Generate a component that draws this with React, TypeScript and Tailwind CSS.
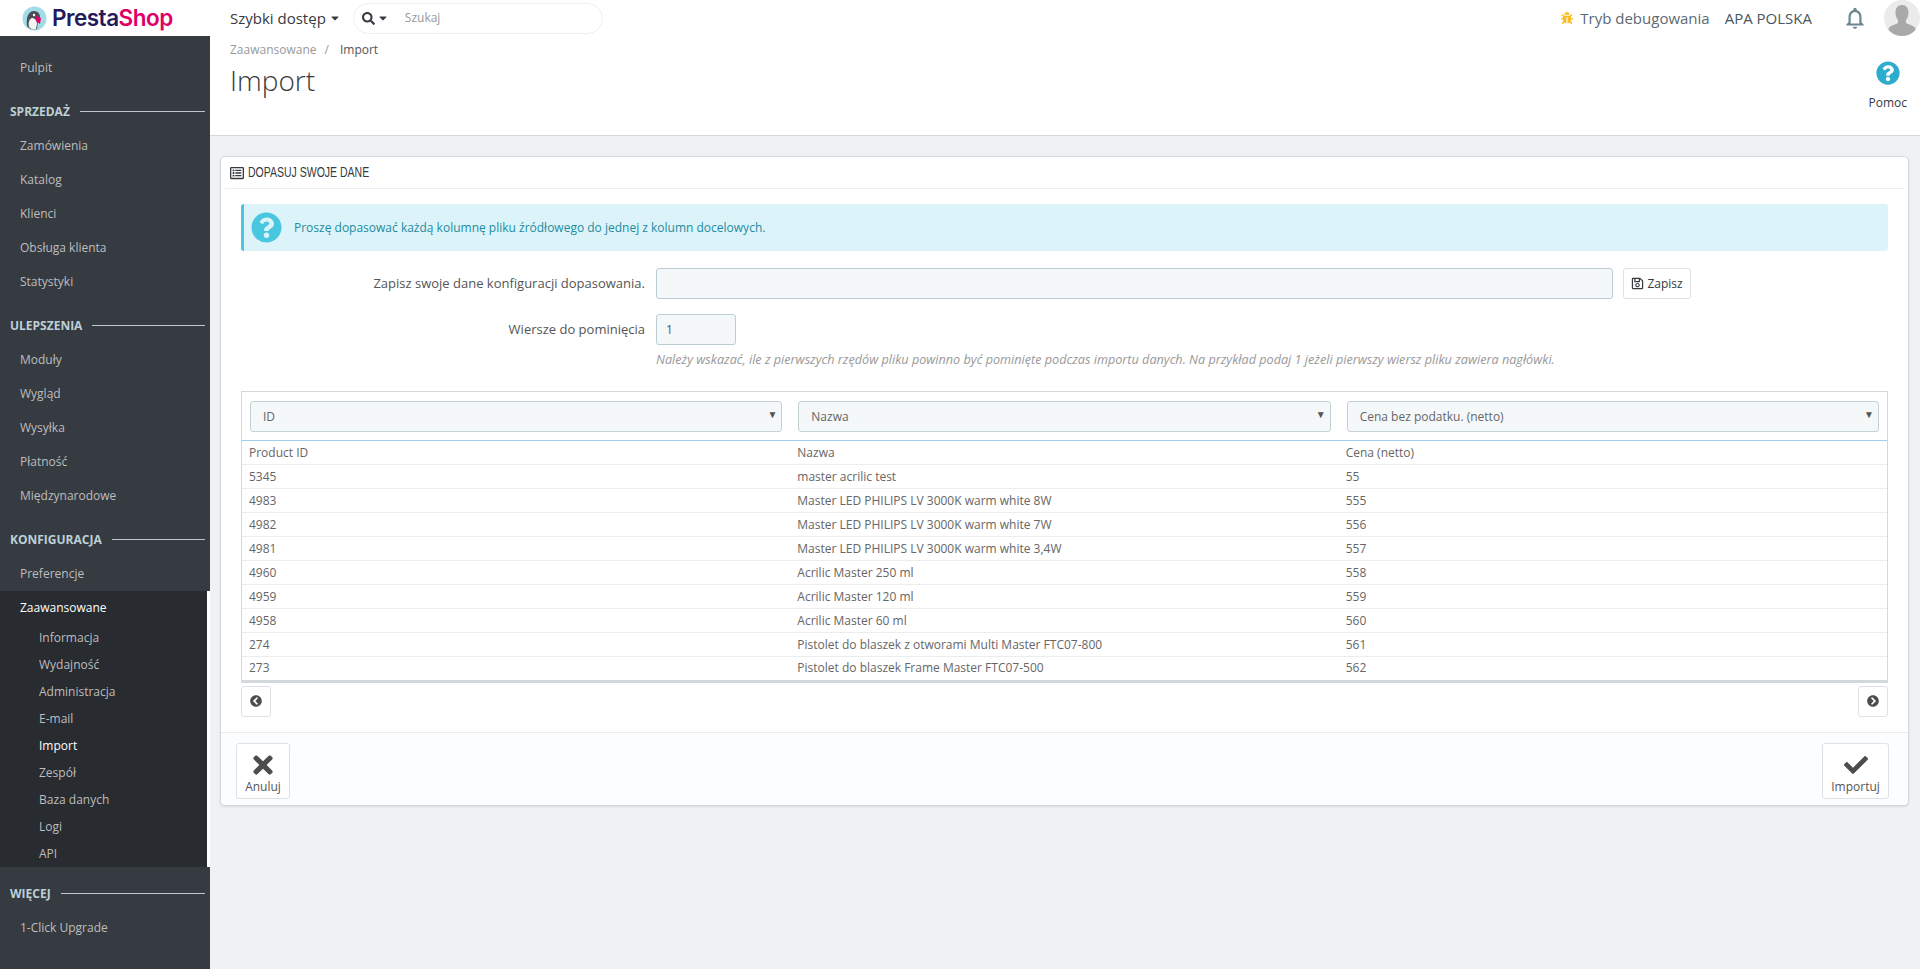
import { FaBug, FaCaretDown, FaCheck, FaChevronCircleLeft, FaChevronCircleRight, FaQuestionCircle, FaRegListAlt, FaRegSave, FaSearch, FaTimes } from 'react-icons/fa'
import { MdNotificationsNone } from 'react-icons/md'

const rows = [
  ['5345', 'master acrilic test', '55'],
  ['4983', 'Master LED PHILIPS LV 3000K warm white 8W', '555'],
  ['4982', 'Master LED PHILIPS LV 3000K warm white 7W', '556'],
  ['4981', 'Master LED PHILIPS LV 3000K warm white 3,4W', '557'],
  ['4960', 'Acrilic Master 250 ml', '558'],
  ['4959', 'Acrilic Master 120 ml', '559'],
  ['4958', 'Acrilic Master 60 ml', '560'],
  ['274', 'Pistolet do blaszek z otworami Multi Master FTC07-800', '561'],
  ['273', 'Pistolet do blaszek Frame Master FTC07-500', '562'],
]

const subItems = ['Informacja', 'Wydajność', 'Administracja', 'E-mail', 'Import', 'Zespół', 'Baza danych', 'Logi', 'API']

function PrestaLogo() {
  return (
    <svg width="25" height="25" viewBox="0 0 25 25">
      <circle cx="12.5" cy="12.5" r="12" fill="#a4dbe8" />
      <path d="M5 20C4 12 6 5 12 5c4 0 6 3 6 6l-2 4-1 8c-4 1-8 0-10-3z" fill="#4a4f57" />
      <path d="M7 21c-1-4 0-8 3-9 3 0 5 3 5 6l-1 5c-3 1-5 0-7-2z" fill="#f4f4f2" />
      <path d="M14 10l5 2-1 6-4-3z" fill="#df0067" />
      <circle cx="12" cy="9" r="1.2" fill="#fff" />
    </svg>
  )
}

function Avatar() {
  return (
    <svg width="36" height="36" viewBox="0 0 36 36">
      <defs>
        <clipPath id="avatar-clip">
          <circle cx="18" cy="18" r="18" />
        </clipPath>
      </defs>
      <g clipPath="url(#avatar-clip)">
        <rect width="36" height="36" fill="#ebebeb" />
        <path d="M18 5c4.500 0 6.500 3.500 6.500 7.500 0 3-1 6-2.500 7.500v3c2 1.500 8 2.500 9.500 5.500V36h-27v-7.500c1.500-3 7.500-4 9.500-5.500v-3c-1.500-1.500-2.500-4.500-2.500-7.500C11.500 8.500 13.500 5 18 5z" fill="#a9a9a9" />
      </g>
    </svg>
  )
}

function NavItem({ label, active }: { label: string; active?: boolean }) {
  return <div className={`flex h-[34px] items-center pl-5 ${active ? 'text-white' : 'text-[#bebebe]'}`}>{label}</div>
}

function NavTitle({ label }: { label: string }) {
  return (
    <div className="mt-[9px] flex h-[35px] items-center gap-[10px] pl-[10px] pr-[5px]">
      <span className="font-bold text-[#bcd0d6]">{label}</span>
      <span className="h-px flex-1 bg-[#bcc8cc]" />
    </div>
  )
}

function Sidebar() {
  return (
    <aside className="w-[210px] shrink-0 bg-[#363a41] pt-[15px] text-[12px]">
      <NavItem label="Pulpit" />
      <NavTitle label="SPRZEDAŻ" />
      <NavItem label="Zamówienia" />
      <NavItem label="Katalog" />
      <NavItem label="Klienci" />
      <NavItem label="Obsługa klienta" />
      <NavItem label="Statystyki" />
      <NavTitle label="ULEPSZENIA" />
      <NavItem label="Moduły" />
      <NavItem label="Wygląd" />
      <NavItem label="Wysyłka" />
      <NavItem label="Płatność" />
      <NavItem label="Międzynarodowe" />
      <NavTitle label="KONFIGURACJA" />
      <NavItem label="Preferencje" />
      <div className="border-r-[3px] border-white bg-[#282b30]">
        <NavItem label="Zaawansowane" active />
        {subItems.map((item) => (
          <div key={item} className={`flex h-[26.9px] items-center pl-[39px] ${item === 'Import' ? 'text-white' : 'text-[#bebebe]'}`}>
            {item}
          </div>
        ))}
      </div>
      <NavTitle label="WIĘCEJ" />
      <NavItem label="1-Click Upgrade" />
    </aside>
  )
}

function Header() {
  return (
    <header className="flex h-9 items-center bg-white text-[15px] text-[#5d6a73]">
      <div className="flex w-[230px] shrink-0 items-center gap-[5px] pl-[22px]">
        <PrestaLogo />
        <span className="font-['Inter',sans-serif] text-[22.5px] font-semibold tracking-[-0.5px] text-[#251b5b]">
          Presta<span className="text-[#df0067]">Shop</span>
        </span>
      </div>
      <button className="flex items-center gap-[3px] text-[#363a41]">
        Szybki dostęp
        <FaCaretDown className="h-3 w-3" />
      </button>
      <div className="ml-3 flex h-[31px] w-[250px] items-center rounded-full border border-[#eeeeee] pl-2 text-[12px]">
        <FaSearch className="h-[13px] w-[13px] text-[#363a41]" />
        <FaCaretDown className="ml-[2px] h-3 w-3 text-[#363a41]" />
        <span className="ml-[16px] text-[#999999]">Szukaj</span>
      </div>
      <div className="ml-auto flex items-center">
        <FaBug className="h-[12px] w-[12px] text-[#fbbb22]" />
        <span className="ml-[7px]">Tryb debugowania</span>
        <span className="ml-[15px] text-[#4b555c]">APA POLSKA</span>
        <MdNotificationsNone className="ml-[30px] h-[26px] w-[26px] text-[#6c868e]" />
        <div className="ml-[16px]">
          <Avatar />
        </div>
      </div>
    </header>
  )
}

function FormRows() {
  return (
    <div className="text-[13px] text-[#555555]">
      <div className="mt-[17px] flex items-center">
        <label className="w-[404px] text-right">Zapisz swoje dane konfiguracji dopasowania.</label>
        <input className="ml-[11px] h-[31px] w-[957px] rounded-[3px] border border-[#bbcdd2] bg-[#f5f8f9]" />
        <button className="ml-[10px] flex h-[31px] w-[68px] items-center justify-center gap-[3px] rounded-[3px] border border-[#dde2e4] bg-white text-[12px] text-[#363a41]">
          <FaRegSave className="h-[13px] w-[13px]" />
          Zapisz
        </button>
      </div>
      <div className="mt-[15px] flex items-center">
        <label className="w-[404px] text-right">Wiersze do pominięcia</label>
        <input defaultValue="1" className="ml-[11px] h-[31px] w-[80px] rounded-[3px] border border-[#bbcdd2] bg-[#f5f8f9] pl-[9px] text-[12px]" />
      </div>
      <p className="ml-[415px] mt-[5px] h-[18px] text-[12.65px] italic leading-[18px] text-[#999999]">
        Należy wskazać, ile z pierwszych rzędów pliku powinno być pominięte podczas importu danych. Na przykład podaj 1 jeżeli pierwszy wiersz pliku zawiera nagłówki.
      </p>
    </div>
  )
}

function ColumnSelect({ value }: { value: string }) {
  return (
    <div className="relative">
      <select defaultValue={value} className="h-[31px] w-full appearance-none rounded-[3px] border border-[#c4d1d5] bg-[#f5f8f9] pl-3 text-[12px] font-normal text-[#666666]">
        <option>{value}</option>
      </select>
      <span className="absolute right-[5px] top-[6px] text-[10px] leading-[14px] text-[#555555]">▼</span>
    </div>
  )
}

function MatchTable() {
  return (
    <div className="mt-[23px] border border-[#d3d8db]">
      <table className="w-full table-fixed border-collapse text-left text-[12px] text-[#666666]">
        <thead>
          <tr className="border-b border-[#a0d0eb]">
            <th className="px-2 pb-2 pt-[9px]"><ColumnSelect value="ID" /></th>
            <th className="px-2 pb-2 pt-[9px]"><ColumnSelect value="Nazwa" /></th>
            <th className="px-2 pb-2 pt-[9px]"><ColumnSelect value="Cena bez podatku. (netto)" /></th>
          </tr>
        </thead>
        <tbody>
          <tr className="h-6 border-b border-[#eaedee]">
            <td className="pl-[7px]">Product ID</td>
            <td className="pl-[7px]">Nazwa</td>
            <td className="pl-[7px]">Cena (netto)</td>
          </tr>
          {rows.map((row) => (
            <tr key={row[0]} className="h-6 border-b border-[#eaedee] last:border-b-2 last:border-[#d3d8db]">
              <td className="pl-[7px]">{row[0]}</td>
              <td className="pl-[7px]">{row[1]}</td>
              <td className="pl-[7px]">{row[2]}</td>
            </tr>
          ))}
        </tbody>
      </table>
    </div>
  )
}

function Panel() {
  return (
    <section className="rounded-[5px] border border-[#d3d8db] bg-white shadow-[0_1px_2px_rgba(0,0,0,0.1)]">
      <h3 className="mx-1 flex h-[32px] items-center gap-[4px] border-b border-[#eaedee] pl-[5px] font-['Liberation_Sans',sans-serif] text-[14px] text-[#363a41]">
        <FaRegListAlt className="h-[14px] w-[14px]" />
        <span className="origin-left scale-x-75">DOPASUJ SWOJE DANE</span>
      </h3>
      <div className="px-5 pb-[15px] pt-[15px]">
        <div className="flex h-[47px] items-center rounded-[3px] border-l-[3px] border-[#4ac7e0] bg-[#dcf4f9] text-[12px] text-[#1e8ba0]">
          <FaQuestionCircle className="ml-[7px] h-[31px] w-[31px] text-[#4ac7e0]" />
          <span className="ml-[12px]">Proszę dopasować każdą kolumnę pliku źródłowego do jednej z kolumn docelowych.</span>
        </div>
        <FormRows />
        <MatchTable />
        <div className="mt-[3px] flex justify-between">
          <button className="flex h-[31px] w-[30px] items-center justify-center rounded-[3px] border border-[#dde2e4] text-[#4d4d4d]">
            <FaChevronCircleLeft className="h-[12px] w-[12px]" />
          </button>
          <button className="flex h-[31px] w-[30px] items-center justify-center rounded-[3px] border border-[#dde2e4] text-[#4d4d4d]">
            <FaChevronCircleRight className="h-[12px] w-[12px]" />
          </button>
        </div>
      </div>
      <div className="flex h-[73px] justify-between rounded-b-[5px] border-t border-[#eaedee] bg-[#fcfdfe] pl-[15px] pr-[19px] pt-[10px] text-[12px] text-[#555555]">
        <button className="flex h-[56px] w-[54px] flex-col items-center rounded-[3px] border border-[#dde2e4] bg-white pt-[9px]">
          <span className="flex h-6 items-center">
            <FaTimes className="h-[28px] w-[28px] text-[#4d4d4d]" />
          </span>
          <span className="mt-px">Anuluj</span>
        </button>
        <button className="flex h-[56px] w-[67px] flex-col items-center rounded-[3px] border border-[#dde2e4] bg-white pt-[9px]">
          <span className="flex h-6 items-center">
            <FaCheck className="h-6 w-6 text-[#4d4d4d]" />
          </span>
          <span className="mt-px">Importuj</span>
        </button>
      </div>
    </section>
  )
}

export default function App() {
  return (
    <div className="flex min-h-screen flex-col bg-[#eff1f2] font-['Open_Sans',sans-serif]">
      <Header />
      <div className="flex flex-1">
        <Sidebar />
        <main className="flex-1">
          <div className="flex h-[100px] justify-between border-b border-[#d3d8db] bg-white pl-5 pr-[13px]">
            <div>
              <div className="flex h-[28px] items-center text-[12px] text-[#999999]">
                Zaawansowane
                <span className="ml-2">/</span>
                <span className="ml-[11px] text-[#555555]">Import</span>
              </div>
              <h1 className="-mt-px text-[28px] font-light leading-[34px] text-[#363a41]">Import</h1>
            </div>
            <div className="flex flex-col items-center pt-[25px]">
              <FaQuestionCircle className="h-6 w-6 text-[#2eacce]" />
              <span className="mt-[9px] text-[12px] text-[#363a41]">Pomoc</span>
            </div>
          </div>
          <div className="ml-[10px] mr-[11px] mt-[20px]">
            <Panel />
          </div>
        </main>
      </div>
    </div>
  )
}
